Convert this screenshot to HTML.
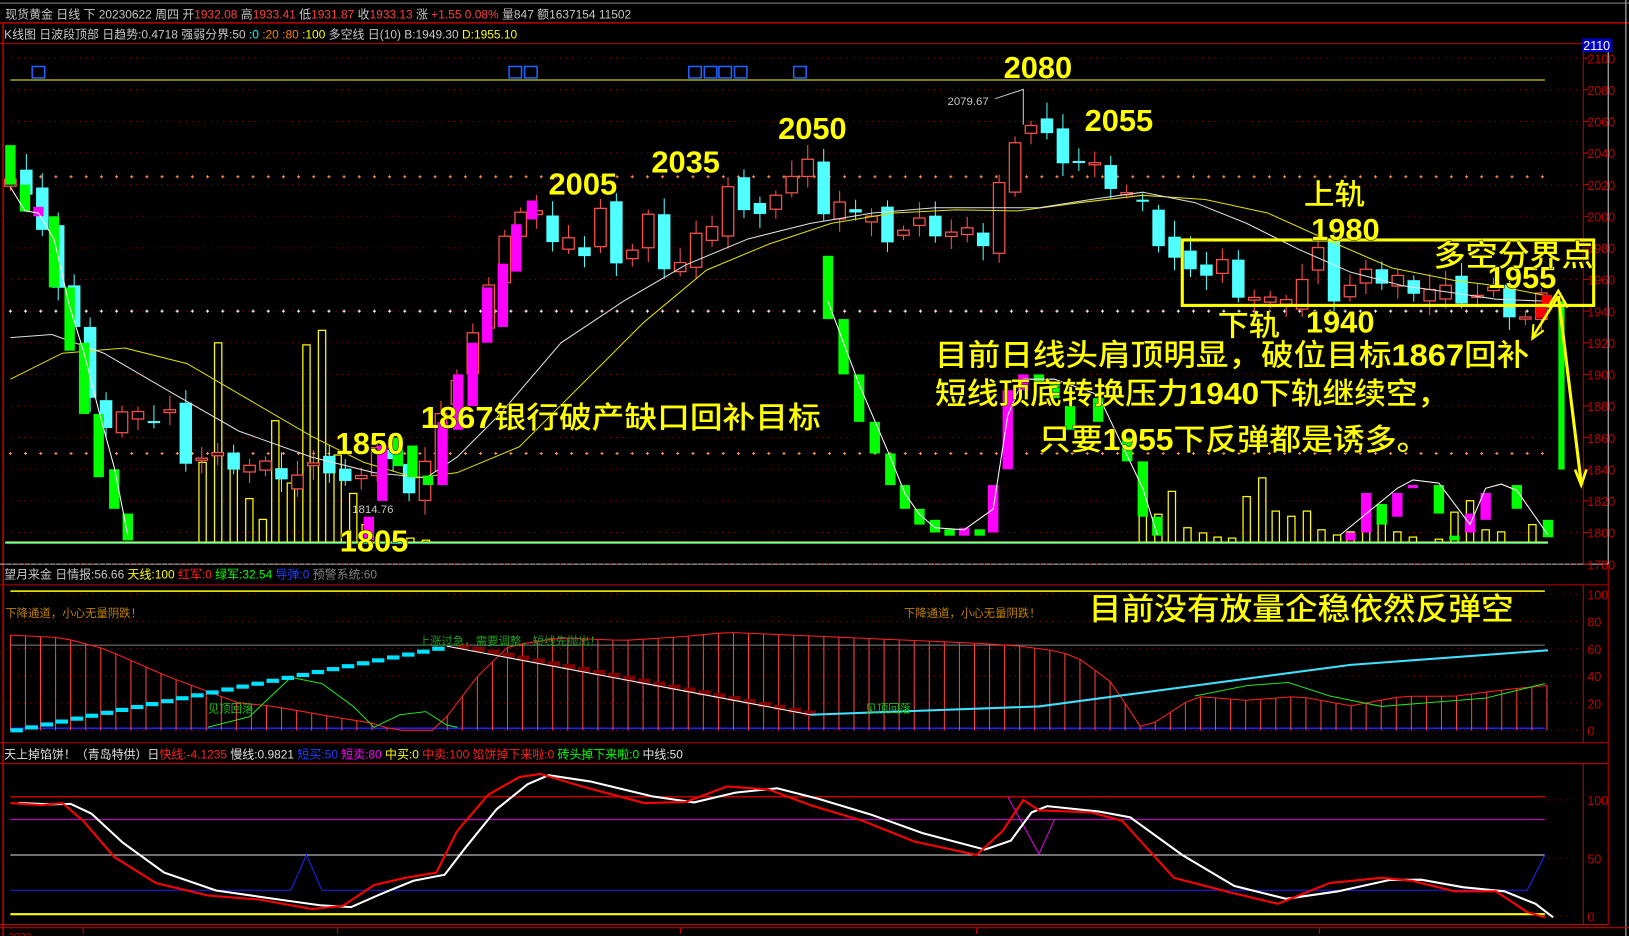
<!DOCTYPE html>
<html><head><meta charset="utf-8">
<style>
html,body{margin:0;padding:0;background:#000;overflow:hidden}
svg{display:block}
text{font-family:"Liberation Sans","Noto Sans CJK SC",sans-serif}
</style></head><body>
<svg id="s" width="1629" height="936" viewBox="0 0 1568 901" preserveAspectRatio="none" xmlns="http://www.w3.org/2000/svg">
<rect width="1568" height="901" fill="#000"/>
<g id="g"></g>
</svg>
<script>
var o=[];
function L(x1,y1,x2,y2,c,w,d){o.push('<line x1="'+x1+'" y1="'+y1+'" x2="'+x2+'" y2="'+y2+'" stroke="'+c+'" stroke-width="'+(w||1)+'"'+(d?' stroke-dasharray="'+d+'"':'')+'/>');}
function R(x,y,w,h,f,s,sw){o.push('<rect x="'+x+'" y="'+y+'" width="'+w+'" height="'+h+'" fill="'+(f||'none')+'"'+(s?' stroke="'+s+'" stroke-width="'+(sw||1)+'"':'')+'/>');}
function P(pts,c,w){o.push('<polyline fill="none" stroke="'+c+'" stroke-width="'+(w||1)+'" points="'+pts.map(function(p){return p[0]+','+p[1]}).join(' ')+'"/>');}
function T(x,y,t,sz,c,extra){o.push('<text x="'+x+'" y="'+y+'" font-size="'+sz+'" fill="'+c+'" '+(extra||'')+'>'+t+'</text>');}
function TL(x,y,t,sz,c,extra,len){T(x,y,t,sz,c,(extra||'')+' textLength="'+len+'" lengthAdjust="spacingAndGlyphs"');}
function interp(k,x){for(var i=0;i<k.length-1;i++){if(x>=k[i][0]&&x<=k[i+1][0]){var t=(x-k[i][0])/(k[i+1][0]-k[i][0]);return k[i][1]+t*(k[i+1][1]-k[i][1]);}}return x<k[0][0]?k[0][1]:k[k.length-1][1];}
var py=function(p){return 56+(2100-p)*1.522;};
T(5,18,'现货黄金 日线 下 20230622 周四 开<tspan fill="#ff4040">1932.08</tspan> 高<tspan fill="#ff4040">1933.41</tspan> 低<tspan fill="#ff4040">1931.87</tspan> 收<tspan fill="#ff4040">1933.13</tspan> 涨 <tspan fill="#ff4040">+1.55 0.08%</tspan> 量847 额1637154 11502',11.5,'#c8c8c8');
L(0,22,1568,22,'#c00000',1.5);
T(4,37,'K线图 日波段顶部 日趋势:0.4718 强弱分界:50 <tspan fill="#00ffff">:0</tspan> <tspan fill="#ff8000">:20</tspan> <tspan fill="#ff8000">:80</tspan> <tspan fill="#ffff00">:100</tspan> 多空线 日(10) B:1949.30 <tspan fill="#ffff00">D:1955.10</tspan>',11.5,'#c8c8c8');
L(0,42,1548,42,'#c00000',1);
L(3,22,3,901,'#c00000',1.5);
L(1524,42,1524,543,'#c00000',1);
L(1548,42,1548,543,'#c8c8c8',1);
L(0,543,1548,543,'#c8c8c8',1);
L(1565,0,1565,901,'#c8c8c8',1);
L(0,3,1568,3,'#888',1);
for(var p=2100;p>=1780;p-=20){var y=py(p);L(5,y,1520,y,'#a00000',1,'1 5');L(1524,y,1530,y,'#c00000',1);T(1528,y+5,p,12,'#c00000');}
R(1523,37,29,13,'#0000c0');T(1524,48,'2110',12,'#fff');
[[2025,'#ff9050'],[1940,'#ffffff'],[1850,'#ff9050']].forEach(function(a){var y=py(a[0]);for(var x=10;x<1490;x+=14.6){L(x-1.5,y,x+1.5,y,a[1],1);L(x,y-1.5,x,y+1.5,a[1],1);}});
L(10,77,1487,77,'#ffff00',1);
[37,496,511,669,684,698,713,770].forEach(function(x){R(x-6,64,12,11,'none','#2060ff',1.5);});
var vol=[[195,445],[210,330],[225,445],[240,480],[253,500],[265,405],[280,465],[295,332],[310,318],[325,438],[340,475],[352,505],[395,518],[410,520],[1100,455],[1115,495],[1128,473],[1143,508],[1158,513],[1172,517],[1186,518],[1200,478],[1215,460],[1228,492],[1243,497],[1258,492],[1272,510],[1287,515],[1300,512],[1315,480],[1330,490],[1345,512],[1360,517],[1385,519],[1400,493],[1415,482],[1430,510],[1445,512],[1475,505]];
vol.forEach(function(v){R(v[0]-3.5,v[1],7,522-v[1],'none','#ffff00',1.2);});
L(5,522,1490,522,'#ffff00',1.5);L(5,523,1490,523,'#00e0e0',1);
var wma=[[10,325],[50,322],[100,340],[160,375],[230,415],[300,440],[360,455],[410,460],[440,440],[480,400],[540,330],[600,290],[660,255],[720,230],[780,215],[840,205],[900,200],[960,200],[1000,200],[1050,192],[1100,185],[1150,195],[1200,215],[1250,240],[1300,262],[1350,275],[1400,282],[1440,288],[1490,290]];
var yma=[[10,365],[60,340],[120,335],[180,350],[240,385],[300,420],[350,445],[400,460],[440,455],[500,430],[560,370],[620,310],[680,260],[740,235],[800,215],[860,205],[920,202],[980,203],[1040,195],[1100,188],[1160,192],[1220,205],[1280,232],[1340,258],[1400,270],[1440,275],[1490,285]];
var key=[[0,2030],[1,2015],[3,1960],[4,1930],[5,1880],[6,1870],[7,1875],[8,1870],[10,1875],[11,1850],[14,1845],[18,1835],[20,1840],[21,1830],[23,1855],[25,1830],[26,1845],[27,1870],[28,1900],[30,1950],[31,1990],[33,2010],[34,1985],[36,1980],[37,2005],[38,1965],[40,2000],[41,1960],[44,2000],[45,2020],[46,2000],[49,2020],[50,2040],[51,2000],[53,2005],[55,1990],[57,1995],[59,1990],[61,1985],[62,2020],[63,2040],[64,2060],[66,2040],[68,2030],[70,2015],[71,2005],[72,1985],[74,1960],[76,1970],[77,1955],[79,1945],[81,1960],[82,1975],[83,1950],[85,1960],[87,1960],[89,1955],[91,1950],[93,1950],[94,1940],[95,1935],[96,1945]];
var prev=2025;
for(var i=0;i<97;i++){var x=10+i*15.35;var c=interp(key,i)+((i*37)%11-5)*1.3;var op=prev+((i*53)%9-4)*1.5;prev=c;
var hi=Math.max(op,c)+3+(i*7)%8,lo=Math.min(op,c)-3-(i*11)%7;
var up=c>=op;var col=up?'#ff5050':'#50ffff';
L(x,py(hi),x,py(lo),col,1);
var t=py(Math.max(op,c)),b=py(Math.min(op,c));if(b-t<2)b=t+2;
if(up)R(x-5.5,t,11,b-t,'#000',col,1.2);else R(x-6,t,12,b-t,col);}
P(yma,'#e0e000',1);P(wma,'#e0e0e0',1);
var wave=[[10,2045,2020,'#00ff00'],[24,2020,2003,'#00ff00'],[37,2006,2000,'#ff00ff'],[52,2000,1955,'#00ff00'],[67,1955,1915,'#00ff00'],[81,1920,1875,'#00ff00'],[95,1875,1835,'#00ff00'],[110,1840,1815,'#00ff00'],[123,1812,1795,'#00ff00'],
[355,1810,1795,'#ff00ff'],[368,1855,1820,'#ff00ff'],[383,1860,1842,'#00ff00'],[397,1855,1835,'#00ff00'],[412,1836,1830,'#00ff00'],[426,1870,1830,'#ff00ff'],[441,1900,1865,'#ff00ff'],[455,1920,1880,'#ff00ff'],[469,1955,1920,'#ff00ff'],[484,1970,1930,'#ff00ff'],[497,1995,1965,'#ff00ff'],[512,2010,1998,'#ff00ff'],
[797,1975,1935,'#00ff00'],[812,1935,1900,'#00ff00'],[827,1900,1870,'#00ff00'],[842,1870,1850,'#00ff00'],[857,1850,1830,'#00ff00'],[871,1830,1815,'#00ff00'],[885,1815,1805,'#00ff00'],[900,1808,1800,'#00ff00'],[914,1802,1798,'#00ff00'],[928,1803,1798,'#ff00ff'],[943,1802,1798,'#00ff00'],[956,1830,1800,'#ff00ff'],[970,1890,1840,'#ff00ff'],[985,1900,1890,'#ff00ff'],[1000,1900,1895,'#00ff00'],[1015,1895,1885,'#00ff00'],[1030,1880,1865,'#00ff00'],[1057,1885,1870,'#00ff00'],[1085,1860,1845,'#00ff00'],[1100,1845,1810,'#00ff00'],[1114,1810,1798,'#00ff00'],
[1300,1800,1795,'#ff00ff'],[1315,1825,1800,'#ff00ff'],[1330,1818,1805,'#00ff00'],[1345,1825,1810,'#ff00ff'],[1360,1830,1828,'#ff00ff'],[1385,1830,1812,'#00ff00'],[1400,1798,1795,'#00ff00'],[1415,1812,1800,'#ff00ff'],[1430,1825,1808,'#ff00ff'],[1460,1830,1815,'#00ff00'],[1490,1808,1797,'#00ff00']];
wave.forEach(function(w){R(w[0]-5,py(w[1]),10,py(w[2])-py(w[1]),w[3]);});
P([[10,180],[24,203],[37,205],[52,230],[67,295],[81,340],[95,395],[110,450],[123,515]],'#fff',1);
P([[797,290],[812,330],[827,370],[842,405],[857,440],[871,475],[885,495],[900,508],[928,510],[956,490],[970,400],[985,365],[1015,365],[1057,380],[1100,470],[1114,515]],'#fff',1);
P([[1290,515],[1345,470],[1360,462],[1385,465],[1415,505],[1430,470],[1445,466],[1460,472],[1490,515]],'#fff',1);
T(912,101,'2079.67',11,'#c8c8c8');P([[958,95],[985,86],[985,120]],'#c8c8c8',1);
T(339,494,'1814.76',11,'#c8c8c8');
R(1500,290,6,162,'#00ff00');R(1484,284,10,12,'#ff0000');R(1478,292,10,14,'#ff0000');
P([[1500,285],[1522,465]],'#ffff00',3);P([[1516,452],[1522,467],[1527,452]],'#ffff00',2.5);
P([[1500,285],[1475,325]],'#ffff00',2.5);P([[1476,312],[1475,326],[1486,318]],'#ffff00',2);
P([[1490,296],[1500,280],[1509,296]],'#ffff00',2.5);
R(1138,231,396,63,'none','#ffff00',3);
var ST='stroke="#000" stroke-width="1" paint-order="stroke" font-weight="bold"';
[[966,75,'2080'],[1044,126,'2055'],[749,134,'2050'],[627,166,'2035'],[528,187,'2005'],[323,437,'1850'],[327,531,'1805'],[1262,231,'1980'],[1432,277,'1955'],[1257,320,'1940']].forEach(function(a){TL(a[0],a[1],a[2],29,'#ffff00',ST+' font-family="Liberation Sans"',66);});
var SC='font-family="Noto Sans CJK SC,sans-serif" font-weight="500" stroke="#000" stroke-width="0.8" paint-order="stroke"';
var B='<tspan font-weight="bold" font-family="Liberation Sans">';
TL(405,412,B+'1867</tspan>银行破产缺口回补目标',29,'#ffff00',SC,385);
TL(1255,197,'上轨',28,'#ffff00',SC,59);
TL(1380,256,'多空分界点',29,'#ffff00',SC,154);
TL(1172,323,'下轨',28,'#ffff00',SC,60);
TL(900,352,'目前日线头肩顶明显，破位目标'+B+'1867</tspan>回补',29,'#ffff00',SC,572);
TL(900,389,'短线顶底转换压力'+B+'1940</tspan>下轨继续空，',29,'#ffff00',SC,495);
TL(1000,433,'只要'+B+'1955</tspan>下反弹都是诱多。',29,'#ffff00',SC,375);
var y2=function(v){return 703-1.31*v;};
T(4,557,'望月来金 日情报:56.66 <tspan fill="#ffff00">天线:100</tspan> <tspan fill="#ff2020">红军:0</tspan> <tspan fill="#00ff00">绿军:32.54</tspan> <tspan fill="#2040ff">导弹:0</tspan> <tspan fill="#808080">预警系统:60</tspan>',11.5,'#c8c8c8');
L(0,563,1548,563,'#c00000',1);L(1524,563,1524,715,'#c00000',1);L(0,715,1548,715,'#c00000',1);L(1548,543,1548,890,'#c00000',1);
for(var v=0;v<=100;v+=20){var y=y2(v);L(5,y,1520,y,'#a00000',1,'1 5');T(1528,y+5,v,12,'#c00000');}
L(10,569,1487,569,'#ffff00',1.5);L(10,621,1487,621,'#808080',1);L(10,701,1487,701,'#2020ff',1.5);
var rk=[[10,70],[60,68],[100,60],[160,40],[230,20],[260,18],[320,10],[360,5],[380,0],[420,0],[460,40],[490,62],[540,68],[600,66],[660,69],[700,72],[760,70],[820,68],[880,66],[940,64],[980,62],[1000,60],[1020,58],[1040,52],[1070,35],[1100,0],[1150,25],[1200,22],[1250,25],[1300,18],[1350,25],[1400,25],[1450,30],[1490,33]];
var rp=[];for(var x=10;x<=1490;x+=14.5){var v=interp(rk,x);rp.push([x,y2(v)]);L(x,703,x,y2(v),'#ff4040',1);}
P(rp,'#ff2020',1);
P([[200,700],[240,690],[280,652],[310,658],[340,680],[360,700],[385,688],[410,685],[430,698],[440,700]],'#20e020',1);
P([[1150,670],[1200,660],[1240,657],[1280,670],[1330,680],[1380,676],[1430,672],[1487,658]],'#20e020',1);
for(var x=10;x<=430;x+=14.5){var v=(x-10)/420*62;R(x,y2(v)-2,12,4,'#00e0ff');}
for(var x=440;x<=780;x+=14.5){var v=62-(x-440)/340*50;R(x,y2(v)-2,12,5,'#800000');}
P([[430,622],[780,688]],'#fff',1);
P([[780,688],[1000,680],[1150,660],[1300,640],[1490,626]],'#40e0ff',2);
T(5,594,'下降通道，小心无量阴跌！',11,'#c08000');T(870,594,'下降通道，小心无量阴跌！',11,'#c08000');
T(403,621,'上涨过急，需要调整，短线先抛出！',11,'#20a020');
T(200,686,'见顶回落',11,'#20c020');T(833,686,'见顶回落',11,'#20c020');
TL(1048,597,'目前没有放量企稳依然反弹空',30,'#ffff00',SC,409);
var y3=function(v){return 882-1.12*v;};
T(4,730,'天上掉馅饼！（青岛特供）日<tspan fill="#ff2020">快线:-4.1235</tspan> 慢线:0.9821 <tspan fill="#2040ff">短买:50</tspan> <tspan fill="#ff00ff">短卖:80</tspan> <tspan fill="#ffff00">中买:0</tspan> <tspan fill="#ff2020">中卖:100</tspan> <tspan fill="#ff2020">馅饼掉下来啦:0</tspan> <tspan fill="#00ff00">砖头掉下来啦:0</tspan> 中线:50',11.5,'#e0e0e0');
L(0,735,1548,735,'#c00000',1);L(1524,735,1524,890,'#c00000',1);
[[100,770],[50,826],[0,882]].forEach(function(a){L(1490,a[1],1520,a[1],'#a00000',1,'1 5');T(1528,a[1]+5,a[0],12,'#c00000');});
L(10,767,1487,767,'#ff0000',1);L(10,789,1487,789,'#e000e0',1);L(10,823,1487,823,'#e0e0e0',1);
P([[10,857],[280,857],[295,823],[310,857],[1470,857],[1487,823]],'#2020ff',1);
P([[970,767],[1000,822],[1015,789]],'#e000e0',1);
L(10,880,1487,880,'#ffff00',2);
var rc=[[10,773],[40,775],[60,773],[80,790],[110,825],[150,850],[200,862],[250,866],[300,875],[330,872],[360,852],[390,845],[420,840],[440,800],[470,765],[500,748],[520,745],[560,757],[620,773],[660,772],[700,757],[740,760],[780,775],[830,790],[880,810],[940,823],[965,800],[985,770],[1000,780],[1050,782],[1080,790],[1130,845],[1180,858],[1230,870],[1280,850],[1330,845],[1360,848],[1400,858],[1440,858],[1470,878],[1487,883]];
var wc=rc.map(function(p,i){return [p[0]+8,p[1]+(i>0&&i<rc.length-1?(rc[i-1][1]-p[1])*0.4:0)];});
P(wc,'#ffffff',2);P(rc,'#ff0000',2);
L(0,890,1548,890,'#c00000',1);L(0,893,1568,893,'#c00000',1);
[80,325,655,940,1270].forEach(function(x){L(x,893,x,899,'#c00000',1);});
T(8,905,'2023',10,'#c00000');
document.getElementById('g').innerHTML=o.join('');
</script>
</body></html>
